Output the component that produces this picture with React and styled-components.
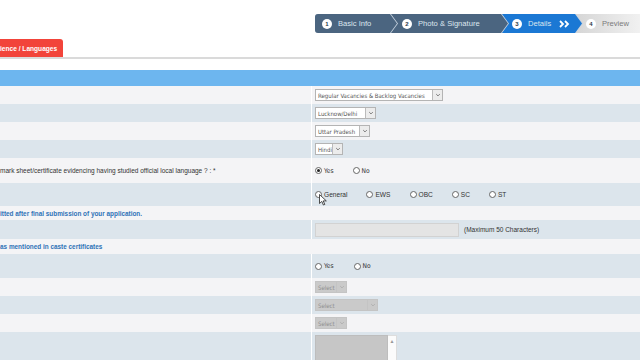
import React from 'react'
import styled, { createGlobalStyle } from 'styled-components'

const GlobalStyle = createGlobalStyle`
  body {
    margin: 0;
    background: #fff;
    font-family: 'Liberation Sans', Arial, sans-serif;
    overflow: hidden;
  }
`

const Page = styled.div`
  position: relative;
  width: 640px;
  height: 360px;
  overflow: hidden;
  background: #fff;
`

const StepsBar = styled.div`
  display: flex;
  margin: 14px 0 0 315px;
  height: 19px;
  background: #c6d2de;
  border-radius: 3px 0 0 3px;
`

const Step = styled.div`
  box-sizing: border-box;
  display: flex;
  align-items: center;
  gap: 6px;
  flex: ${p => (p.$w ? `0 0 ${p.$w}px` : '1')};
  min-width: 0;
  margin-left: ${p => (p.$first ? 0 : -6)}px;
  padding-left: ${p => p.$pad}px;
  font-size: 7.6px;
  white-space: nowrap;
  color: ${p => (p.$tone === 'next' ? '#7a7a7a' : '#dde6ef')};
  background: ${p =>
    p.$tone === 'active'
      ? '#1b78d4'
      : p.$tone === 'next'
      ? 'linear-gradient(90deg, #d6d6d6, #f1f1f1)'
      : '#4b6580'};
  border-radius: ${p => (p.$first ? '3px 0 0 3px' : 0)};
  clip-path: ${p =>
    p.$first
      ? 'polygon(0 0, calc(100% - 7px) 0, 100% 50%, calc(100% - 7px) 100%, 0 100%)'
      : p.$tone === 'next'
      ? 'polygon(0 0, 100% 0, 100% 100%, 0 100%, 7px 50%)'
      : 'polygon(0 0, calc(100% - 7px) 0, 100% 50%, calc(100% - 7px) 100%, 0 100%, 7px 50%)'};
`

const StepNum = styled.span`
  display: inline-flex;
  align-items: center;
  justify-content: center;
  flex: 0 0 10px;
  width: 10px;
  height: 10px;
  border-radius: 50%;
  background: #fff;
  color: #2b3a4a;
  font-size: 6px;
  font-weight: bold;
`

const TabLine = styled.div`
  display: flex;
  margin-top: 6px;
  height: 18px;
  border-bottom: 2px solid #dadada;
`

const Tab = styled.div`
  display: flex;
  align-items: center;
  padding: 0 6px 0 0;
  background: #f2443a;
  color: #fff;
  font-size: 6.6px;
  font-weight: bold;
  border-radius: 0 3px 0 0;
`

const HeadBar = styled.div`
  margin-top: 11px;
  height: 16px;
  background: #6db6ef;
`

const Row = styled.div`
  display: grid;
  grid-template-columns: ${p => (p.$full ? '1fr' : '311px 1fr')};
  height: ${p => p.$h}px;
  background: ${p => (p.$blue ? '#dce5ec' : '#f4f4f6')};
`

const Label = styled.div`
  display: flex;
  align-items: center;
  font-size: ${p => (p.$note ? 6.4 : 6.5)}px;
  color: ${p => (p.$note ? '#2e72b6' : '#333')};
  font-weight: ${p => (p.$note ? 'bold' : 'normal')};
  white-space: nowrap;
  overflow: hidden;
`

const Value = styled.div`
  display: flex;
  align-items: ${p => (p.$top ? 'flex-start' : 'center')};
  padding: ${p => (p.$top ? '3px 0 0 3px' : '0 0 0 3px')};
  border-left: 1px solid #fff;
  font-size: 6.5px;
  color: #444;
`

const Select = styled.div`
  display: flex;
  align-items: center;
  justify-content: space-between;
  box-sizing: border-box;
  width: ${p => p.$w}px;
  height: 12px;
  padding-left: 2px;
  border: 1px solid ${p => (p.$disabled ? '#c4c4c4' : '#b4b4b4')};
  background: ${p => (p.$disabled ? '#cacaca' : '#fff')};
  color: ${p => (p.$disabled ? '#8f8f8f' : '#555')};
  font-family: 'DejaVu Sans Condensed', 'Liberation Sans', sans-serif;
  font-size: 6px;
  white-space: nowrap;
`

const Arrow = styled.span`
  display: flex;
  align-items: center;
  justify-content: center;
  width: 9px;
  height: 10px;
  border-left: 1px solid ${p => (p.$disabled ? '#c4c4c4' : '#bbb')};
  background: ${p => (p.$disabled ? '#cacaca' : '#ececec')};
  color: ${p => (p.$disabled ? '#aaa' : '#666')};
`

const Radios = styled.div`
  display: flex;
  align-items: center;
  gap: ${p => p.$gap}px;
`

const Option = styled.label`
  display: flex;
  align-items: center;
  gap: 2px;
  font-size: 6.6px;
  color: #333;
  font-family: ${p => (p.$condensed ? "'DejaVu Sans Condensed', sans-serif" : "'Liberation Sans', Arial, sans-serif")};
`

const Dot = styled.span`
  box-sizing: border-box;
  width: 7px;
  height: 7px;
  border-radius: 50%;
  border: 1px solid #666;
  background: #fff;
  display: flex;
  align-items: center;
  justify-content: center;
  &::after {
    content: '';
    width: 3px;
    height: 3px;
    border-radius: 50%;
    background: ${p => (p.$on ? '#222' : 'transparent')};
  }
`

const TextBox = styled.div`
  box-sizing: border-box;
  width: 144px;
  height: 14px;
  border: 1px solid #d2d2d2;
  background: #e4e4e4;
`

const Hint = styled.span`
  margin-left: 5px;
  font-size: 6.5px;
  color: #333;
`

const TextArea = styled.div`
  display: flex;
  width: 82px;
  height: 40px;
`

const AreaBody = styled.div`
  flex: 1;
  background: #c6c6c6;
  border: 1px solid #bdbdbd;
`

const ScrollBar = styled.div`
  width: 9px;
  background: #fbfbfb;
  border: 1px solid #ddd;
  border-left: none;
  display: flex;
  justify-content: center;
  font-size: 5px;
  color: #999;
  padding-top: 2px;
  box-sizing: border-box;
`

const Cursor = styled.svg`
  position: absolute;
  left: 319px;
  top: 194px;
`

const Chevron = ({ size = 6 }) => (
  <svg width={size} height={size} viewBox="0 0 10 10">
    <path d="M2 3.5 L5 6.5 L8 3.5" fill="none" stroke="currentColor" strokeWidth="1.4" />
  </svg>
)

function Dropdown({ w, text, disabled }) {
  return (
    <Select $w={w} $disabled={disabled}>
      {text}
      <Arrow $disabled={disabled}>
        <Chevron />
      </Arrow>
    </Select>
  )
}

function RadioGroup({ options, checked, gap, condensed }) {
  return (
    <Radios $gap={gap}>
      {options.map(o => (
        <Option key={o} $condensed={condensed}>
          <Dot $on={o === checked} />
          {o}
        </Option>
      ))}
    </Radios>
  )
}

export default function App() {
  return (
    <Page>
      <GlobalStyle />
      <StepsBar>
        <Step $first $w={82} $pad={7}>
          <StepNum>1</StepNum>Basic Info
        </Step>
        <Step $w={117} $pad={11}>
          <StepNum>2</StepNum>Photo &amp; Signature
        </Step>
        <Step $w={80} $pad={10} $tone="active">
          <StepNum>3</StepNum>Details
          <svg width="12" height="8" viewBox="0 0 12 8" style={{ marginLeft: 2 }}>
            <path d="M1 1 L4 4 L1 7 M6 1 L9 4 L6 7" fill="none" stroke="#fff" strokeWidth="1.8" />
          </svg>
        </Step>
        <Step $pad={10} $tone="next">
          <StepNum>4</StepNum>Preview
        </Step>
      </StepsBar>

      <TabLine>
        <Tab>ience / Languages</Tab>
      </TabLine>

      <HeadBar />

      <Row $h={18}>
        <Label />
        <Value>
          <Dropdown w={128} text="Regular Vacancies & Backlog Vacancies" />
        </Value>
      </Row>
      <Row $h={18} $blue>
        <Label />
        <Value>
          <Dropdown w={61} text="Lucknow/Delhi" />
        </Value>
      </Row>
      <Row $h={18}>
        <Label />
        <Value>
          <Dropdown w={55} text="Uttar Pradesh" />
        </Value>
      </Row>
      <Row $h={18} $blue>
        <Label />
        <Value>
          <Dropdown w={28} text="Hindi" />
        </Value>
      </Row>
      <Row $h={25}>
        <Label>mark sheet/certificate evidencing having studied official local language ? : *</Label>
        <Value>
          <RadioGroup options={['Yes', 'No']} checked="Yes" gap={19} condensed />
        </Value>
      </Row>
      <Row $h={23} $blue>
        <Label />
        <Value>
          <RadioGroup options={['General', 'EWS', 'OBC', 'SC', 'ST']} gap={19} />
        </Value>
      </Row>
      <Row $h={14} $full>
        <Label $note>itted after final submission of your application.</Label>
      </Row>
      <Row $h={19} $blue>
        <Label />
        <Value>
          <TextBox />
          <Hint>(Maximum 50 Characters)</Hint>
        </Value>
      </Row>
      <Row $h={15} $full>
        <Label $note>as mentioned in caste certificates</Label>
      </Row>
      <Row $h={24} $blue>
        <Label />
        <Value>
          <RadioGroup options={['Yes', 'No']} gap={20} condensed />
        </Value>
      </Row>
      <Row $h={18}>
        <Label />
        <Value>
          <Dropdown w={32} text="Select" disabled />
        </Value>
      </Row>
      <Row $h={18} $blue>
        <Label />
        <Value>
          <Dropdown w={63} text="Select" disabled />
        </Value>
      </Row>
      <Row $h={18}>
        <Label />
        <Value>
          <Dropdown w={32} text="Select" disabled />
        </Value>
      </Row>
      <Row $h={40} $blue>
        <Label />
        <Value $top>
          <TextArea>
            <AreaBody />
            <ScrollBar>▲</ScrollBar>
          </TextArea>
        </Value>
      </Row>

      <Cursor width="8" height="12" viewBox="0 0 8 12">
        <path d="M0.5 0.5 L0.5 9.5 L2.8 7.4 L4.4 11 L5.8 10.4 L4.2 6.9 L7.3 6.9 Z" fill="#fff" stroke="#222" strokeWidth="0.8" />
      </Cursor>
    </Page>
  )
}
